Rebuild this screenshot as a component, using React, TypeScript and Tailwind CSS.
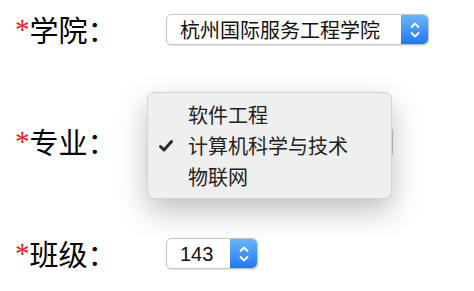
import React from "react"

const cjk = { fontFamily: '"Noto Sans CJK SC", "Noto Sans", sans-serif' }
const serif = { fontFamily: '"Liberation Serif", "Noto Sans CJK SC", serif' }

function Stepper() {
  return (
    <div className="flex h-full w-[27px] shrink-0 items-center justify-center rounded-r-[5px] bg-gradient-to-b from-[#6ab4fb] to-[#1a78f5]">
      <svg width="12" height="20" viewBox="0 0 12 20" fill="none" stroke="white" strokeWidth="1.8" strokeLinecap="round" strokeLinejoin="round">
        <path d="M2.5 7 L6 3.5 L9.5 7" />
        <path d="M2.5 13 L6 16.5 L9.5 13" />
      </svg>
    </div>
  )
}

function Select({ value, width, font }: { value?: string; width: string; font?: React.CSSProperties }) {
  return (
    <div className={`flex h-[31px] ${width} items-center rounded-[5px] border border-[#c6c6c6] bg-white shadow-[0_1px_1px_rgba(0,0,0,0.12)]`}>
      <div className="flex-1 whitespace-nowrap pl-[13px] text-[20px] leading-[24px] text-[#111]" style={font ?? cjk}>
        {value}
      </div>
      <Stepper />
    </div>
  )
}

function Label({ text }: { text: string }) {
  return (
    <div className="flex w-[151px] shrink-0 items-center text-[29px] leading-none text-black">
      <span className="text-[#e5201c]" style={serif}>*</span>
      <span style={cjk}>{text}</span>
    </div>
  )
}

export default function App() {
  const majors = ["软件工程", "计算机科学与技术", "物联网"]
  return (
    <div className="relative h-[291px] w-[474px] overflow-hidden bg-white">
      <div className="flex flex-col gap-[81px] pl-[15px] pt-[14px]">
        <div className="flex items-center">
          <Label text="学院：" />
          <Select value="杭州国际服务工程学院" width="w-[263px]" />
        </div>
        <div className="flex items-center">
          <Label text="专业：" />
          {/* value hidden under the open menu */}
          <Select width="w-[227px]" />
        </div>
        <div className="flex items-center">
          <Label text="班级：" />
          <Select value="143" width="w-[92px]" font={{ fontFamily: '"Liberation Sans", Arial, sans-serif' }} />
        </div>
      </div>

      {/* open popup menu over the 专业 select */}
      <div className="absolute left-[147px] top-[92px] w-[245px] rounded-[7px] border border-[#d4d4d4] bg-[#efefef] py-[6px] shadow-[0_12px_30px_rgba(0,0,0,0.25)]">
        {majors.map((m, i) => (
          <div key={m} className="relative flex h-[31px] items-center pl-[40px] text-[20px] text-[#222]" style={cjk}>
            {i === 1 && (
              <svg className="absolute left-[10px] top-[9px]" width="16" height="14" viewBox="0 0 16 14" fill="none" stroke="#2a2a2a" strokeWidth="3" strokeLinecap="round" strokeLinejoin="round">
                <path d="M2.5 7.5 L6 11 L13.5 2.5" />
              </svg>
            )}
            {m}
          </div>
        ))}
      </div>
    </div>
  )
}
